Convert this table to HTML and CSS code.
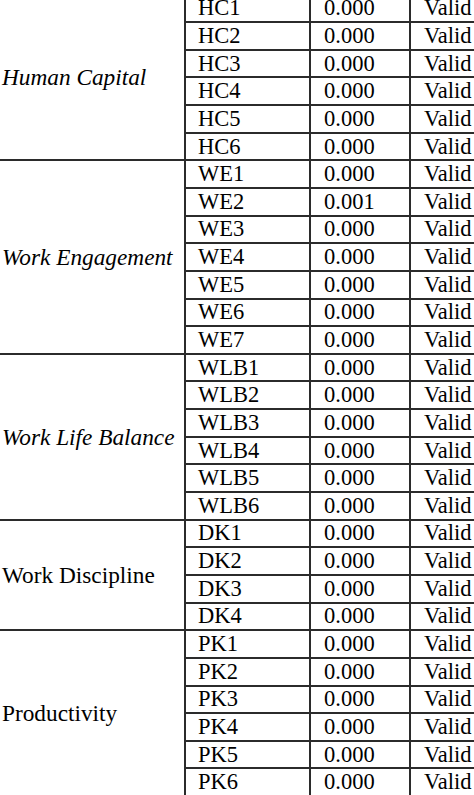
FILE: index.html
```html
<!DOCTYPE html>
<html>
<head>
<meta charset="utf-8">
<link rel="stylesheet" href="styles.css">
</head>
<body>
<table class="validity">
  <colgroup>
    <col class="c-var">
    <col class="c-item">
    <col class="c-sig">
    <col class="c-res">
  </colgroup>
  <tbody>
    <tr><td class="group it" rowspan="6">Human Capital</td><td>HC1</td><td class="num">0.000</td><td class="res">Valid</td></tr>
    <tr><td>HC2</td><td class="num">0.000</td><td class="res">Valid</td></tr>
    <tr><td>HC3</td><td class="num">0.000</td><td class="res">Valid</td></tr>
    <tr><td>HC4</td><td class="num">0.000</td><td class="res">Valid</td></tr>
    <tr><td>HC5</td><td class="num">0.000</td><td class="res">Valid</td></tr>
    <tr><td>HC6</td><td class="num">0.000</td><td class="res">Valid</td></tr>

    <tr><td class="group it" rowspan="7">Work Engagement</td><td>WE1</td><td class="num">0.000</td><td class="res">Valid</td></tr>
    <tr><td>WE2</td><td class="num">0.001</td><td class="res">Valid</td></tr>
    <tr><td>WE3</td><td class="num">0.000</td><td class="res">Valid</td></tr>
    <tr><td>WE4</td><td class="num">0.000</td><td class="res">Valid</td></tr>
    <tr><td>WE5</td><td class="num">0.000</td><td class="res">Valid</td></tr>
    <tr><td>WE6</td><td class="num">0.000</td><td class="res">Valid</td></tr>
    <tr><td>WE7</td><td class="num">0.000</td><td class="res">Valid</td></tr>

    <tr><td class="group it" rowspan="6">Work Life Balance</td><td>WLB1</td><td class="num">0.000</td><td class="res">Valid</td></tr>
    <tr><td>WLB2</td><td class="num">0.000</td><td class="res">Valid</td></tr>
    <tr><td>WLB3</td><td class="num">0.000</td><td class="res">Valid</td></tr>
    <tr><td>WLB4</td><td class="num">0.000</td><td class="res">Valid</td></tr>
    <tr><td>WLB5</td><td class="num">0.000</td><td class="res">Valid</td></tr>
    <tr><td>WLB6</td><td class="num">0.000</td><td class="res">Valid</td></tr>

    <tr><td class="group" rowspan="4">Work Discipline</td><td>DK1</td><td class="num">0.000</td><td class="res">Valid</td></tr>
    <tr><td>DK2</td><td class="num">0.000</td><td class="res">Valid</td></tr>
    <tr><td>DK3</td><td class="num">0.000</td><td class="res">Valid</td></tr>
    <tr><td>DK4</td><td class="num">0.000</td><td class="res">Valid</td></tr>

    <tr><td class="group" rowspan="6">Productivity</td><td>PK1</td><td class="num">0.000</td><td class="res">Valid</td></tr>
    <tr><td>PK2</td><td class="num">0.000</td><td class="res">Valid</td></tr>
    <tr><td>PK3</td><td class="num">0.000</td><td class="res">Valid</td></tr>
    <tr><td>PK4</td><td class="num">0.000</td><td class="res">Valid</td></tr>
    <tr><td>PK5</td><td class="num">0.000</td><td class="res">Valid</td></tr>
    <tr><td>PK6</td><td class="num">0.000</td><td class="res">Valid</td></tr>
  </tbody>
</table>
</body>
</html>
```

FILE: styles.css
```css
html, body {
  margin: 0;
  padding: 0;
  background: #ffffff;
  overflow: hidden;
}

body {
  width: 474px;
  height: 795px;
  font-family: "Liberation Serif", "Times New Roman", serif;
  font-size: 22.5px;
  color: #000000;
}

.validity {
  border-collapse: collapse;
  table-layout: fixed;
  width: 510px;
  margin-top: -6.5px;
}

.c-var { width: 185px; }
.c-item { width: 125px; }
.c-sig { width: 100px; }
.c-res { width: 100px; }

.validity tr {
  height: 27.65px;
}

.validity td {
  border: 2px solid #2b2b2b;
  padding: 0 0 0 12px;
  vertical-align: middle;
  white-space: nowrap;
  line-height: 20px;
}

.validity td.num,
.validity td.res {
  padding-left: 13px;
}

.validity td.group {
  border-left: none;
  padding-left: 2px;
  font-size: 23.3px;
}

.it {
  font-style: italic;
}
```
